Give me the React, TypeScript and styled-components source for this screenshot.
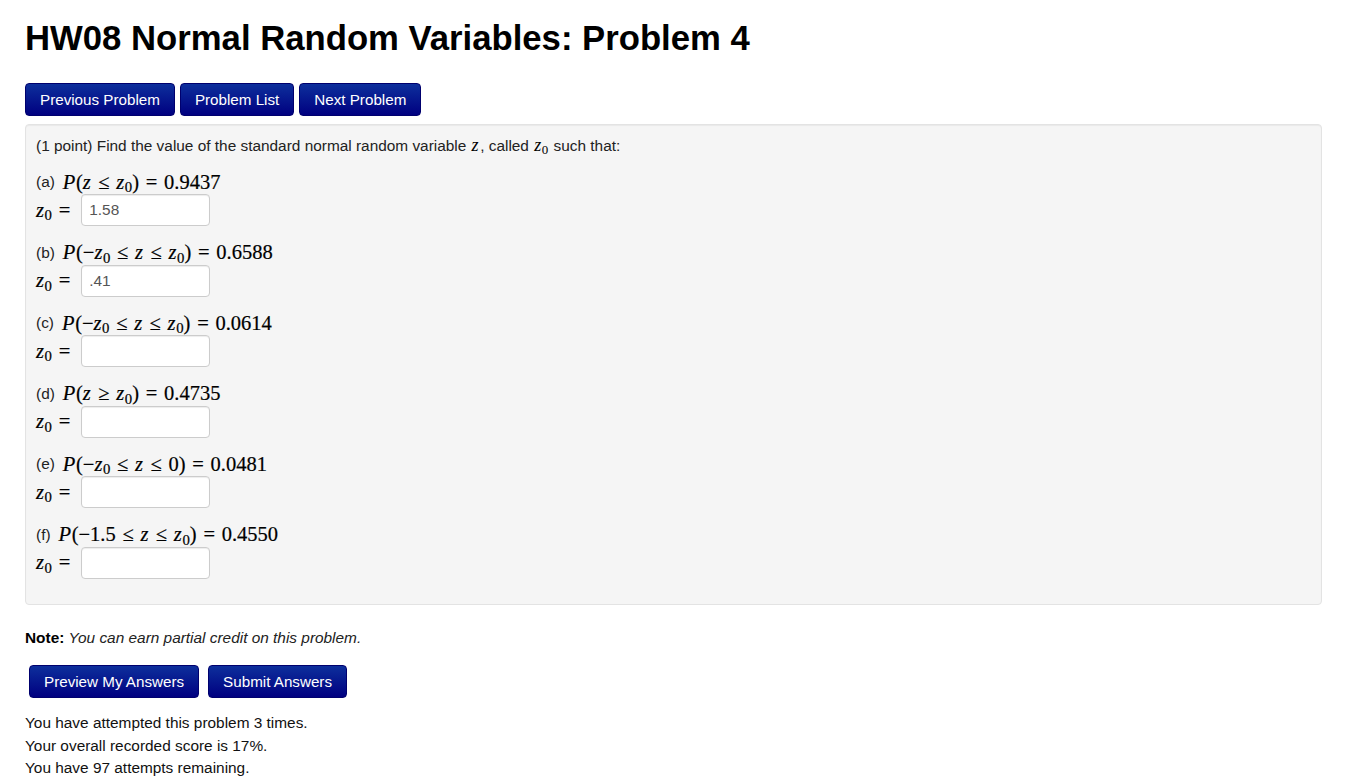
import React from 'react'
import styled, { createGlobalStyle } from 'styled-components'

const GlobalStyle = createGlobalStyle`
    html, body {
        margin: 0;
        padding: 0;
        background: #ffffff;
    }
    body {
        font-family: "Liberation Sans", Arial, Helvetica, sans-serif;
        font-size: 15.4px;
        line-height: 22px;
        color: #222222;
    }
`

const Page = styled.div`
    padding: 18px 42px 0 25px;
`

const Title = styled.h1`
    margin: 0;
    font-size: 34.7px;
    line-height: 40px;
    font-weight: 700;
    color: #000000;
`

const NavBar = styled.div`
    display: flex;
    gap: 5px;
    margin-top: 25px;
`

const Button = styled.button`
    height: 33px;
    padding: 0 14px;
    border: 1px solid #00006e;
    border-radius: 4px;
    background: linear-gradient(to bottom, #0d2f9c 0%, #000080 100%);
    color: #ffffff;
    font-family: "Liberation Sans", Arial, sans-serif;
    font-size: 15.2px;
    cursor: pointer;
`

const Well = styled.div`
    margin-top: 8px;
    padding: 10px 10px 11px;
    background: #f5f5f5;
    border: 1px solid #e3e3e3;
    border-radius: 4px;
    box-shadow: inset 0 1px 1px rgba(0, 0, 0, 0.05);
`

const Intro = styled.div`
    margin-bottom: 13px;
    color: #222222;
`

const Part = styled.div`
    padding-bottom: 14.5px;
`

const PartLabel = styled.div`
    display: flex;
    align-items: center;
    gap: 8px;
    height: 24px;
`

const AnswerRow = styled.div`
    display: flex;
    align-items: center;
    gap: 11px;
    height: 32px;
`

const Math = styled.span`
    font-family: "Liberation Serif", "Times New Roman", serif;
    font-size: 20.5px;
    line-height: 1;
    color: #000000;
    white-space: nowrap;
    -webkit-text-stroke: 0.2px #000000;
`

const InlineMath = styled(Math)`
    font-size: 18px;
    padding: 0 1px;
    -webkit-text-stroke: 0;
`

const V = styled.span`
    font-style: italic;
    padding-right: 0.03em;
`

const Sub = styled.span`
    font-size: 72%;
    position: relative;
    top: 0.24em;
    font-style: normal;
`

const Op = styled.span<{ $trail?: boolean }>`
    padding: 0 ${p => (p.$trail ? '0' : '0.33em')} 0 0.33em;
`

const AnswerInput = styled.input`
    box-sizing: border-box;
    width: 129px;
    height: 32px;
    padding: 4px 7px;
    border: 1px solid #cccccc;
    border-radius: 4px;
    background: #ffffff;
    box-shadow: inset 0 1px 1px rgba(0, 0, 0, 0.075);
    font-family: "Liberation Sans", Arial, sans-serif;
    font-size: 15.4px;
    color: #555555;
`

const Note = styled.p`
    margin: 22px 0 0;
    color: #000000;
    b { font-weight: 700; }
    i { font-style: italic; color: #222222; }
`

const SubmitBar = styled.div`
    display: flex;
    gap: 9px;
    margin: 16px 0 0 4px;
`

const Status = styled.div`
    margin-top: 14px;
    line-height: 22.5px;
    color: #111111;
`

const Z0 = () => (
    <>
        <V>z</V>
        <Sub>0</Sub>
    </>
)

const parts: { id: string; expr: React.ReactNode; value: string }[] = [
    {
        id: 'a',
        expr: (<><V>P</V>(<V>z</V><Op>≤</Op><Z0 />)<Op>=</Op>0.9437</>),
        value: '1.58',
    },
    {
        id: 'b',
        expr: (<><V>P</V>(−<Z0 /><Op>≤</Op><V>z</V><Op>≤</Op><Z0 />)<Op>=</Op>0.6588</>),
        value: '.41',
    },
    {
        id: 'c',
        expr: (<><V>P</V>(−<Z0 /><Op>≤</Op><V>z</V><Op>≤</Op><Z0 />)<Op>=</Op>0.0614</>),
        value: '',
    },
    {
        id: 'd',
        expr: (<><V>P</V>(<V>z</V><Op>≥</Op><Z0 />)<Op>=</Op>0.4735</>),
        value: '',
    },
    {
        id: 'e',
        expr: (<><V>P</V>(−<Z0 /><Op>≤</Op><V>z</V><Op>≤</Op>0)<Op>=</Op>0.0481</>),
        value: '',
    },
    {
        id: 'f',
        expr: (<><V>P</V>(−1.5<Op>≤</Op><V>z</V><Op>≤</Op><Z0 />)<Op>=</Op>0.4550</>),
        value: '',
    },
]

export default function App() {
    return (
        <>
            <GlobalStyle />
            <Page>
                <Title>HW08 Normal Random Variables: Problem 4</Title>

                <NavBar>
                    <Button>Previous Problem</Button>
                    <Button>Problem List</Button>
                    <Button>Next Problem</Button>
                </NavBar>

                <Well>
                    <Intro>
                        (1 point) Find the value of the standard normal random variable{' '}
                        <InlineMath><V>z</V></InlineMath>, called{' '}
                        <InlineMath><Z0 /></InlineMath> such that:
                    </Intro>

                    {parts.map(part => (
                        <Part key={part.id}>
                            <PartLabel>
                                <span>({part.id})</span>
                                <Math>{part.expr}</Math>
                            </PartLabel>
                            <AnswerRow>
                                <Math>
                                    <Z0 />
                                    <Op $trail>=</Op>
                                </Math>
                                <AnswerInput defaultValue={part.value} />
                            </AnswerRow>
                        </Part>
                    ))}
                </Well>

                <Note>
                    <b>Note:</b> <i>You can earn partial credit on this problem.</i>
                </Note>

                <SubmitBar>
                    <Button>Preview My Answers</Button>
                    <Button>Submit Answers</Button>
                </SubmitBar>

                <Status>
                    You have attempted this problem 3 times.
                    <br />
                    Your overall recorded score is 17%.
                    <br />
                    You have 97 attempts remaining.
                </Status>
            </Page>
        </>
    )
}
